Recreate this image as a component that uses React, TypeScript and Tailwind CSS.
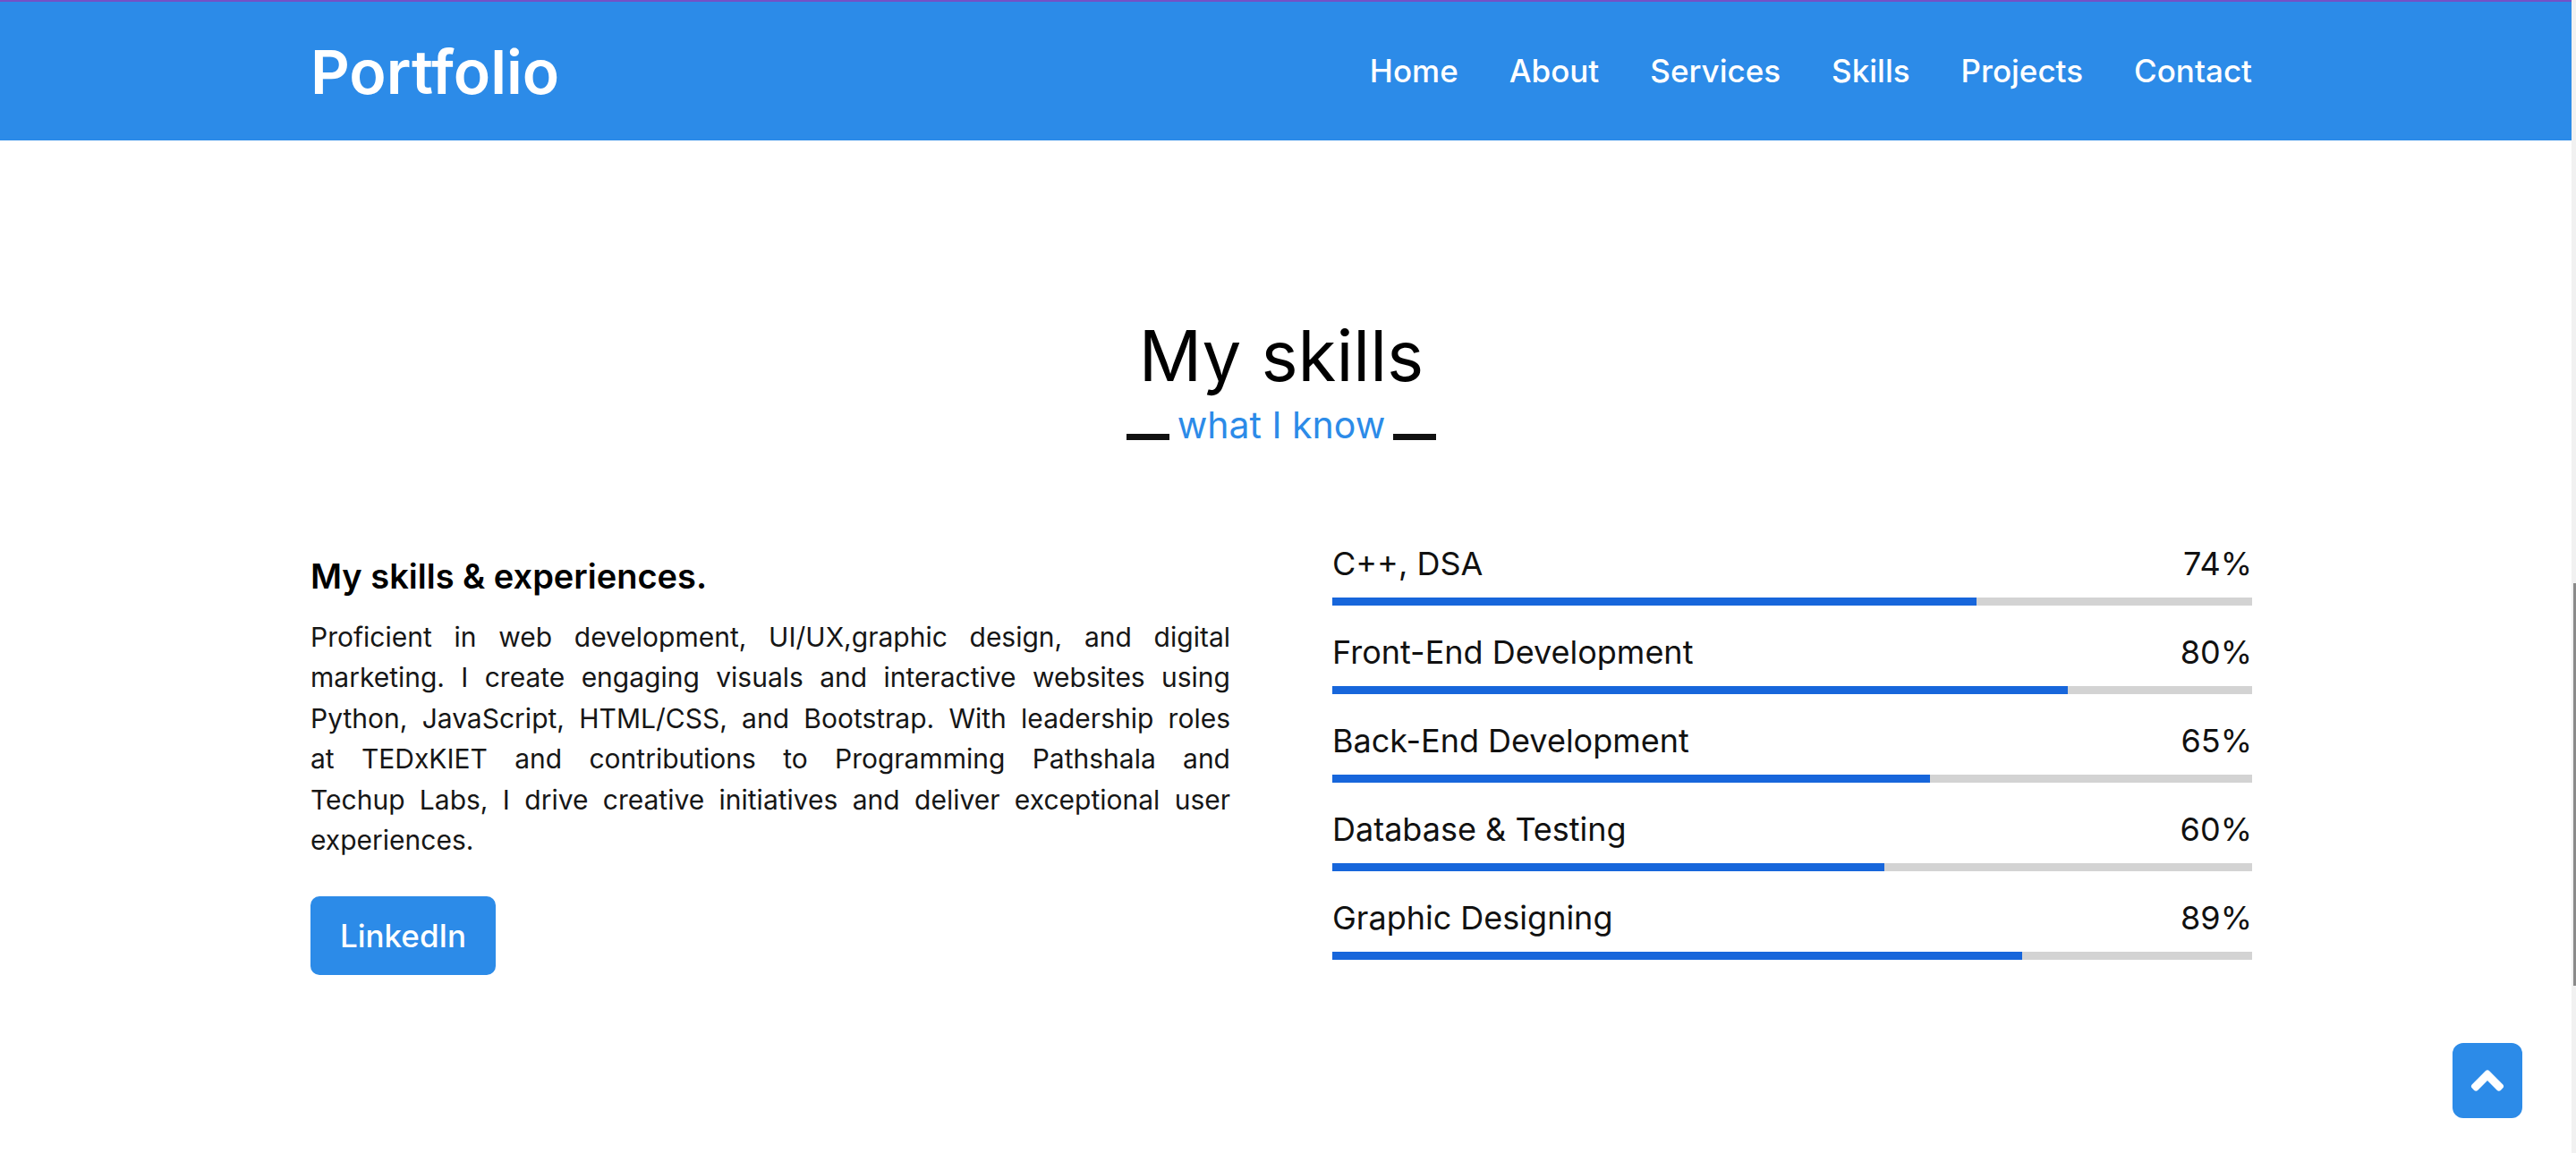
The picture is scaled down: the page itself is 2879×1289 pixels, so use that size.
import { FaAngleUp } from "react-icons/fa";

const links = ["Home", "About", "Services", "Skills", "Projects", "Contact"];

// label, shown percent, bar fill (as drawn in the design)
const skills = [
    { name: "C++, DSA", pct: "74%", fill: 70 },
    { name: "Front-End Development", pct: "80%", fill: 80 },
    { name: "Back-End Development", pct: "65%", fill: 65 },
    { name: "Database & Testing", pct: "60%", fill: 60 },
    { name: "Graphic Designing", pct: "89%", fill: 75 },
];

const paragraph = [
    "Proficient in web development, UI/UX,graphic design, and digital",
    "marketing. I create engaging visuals and interactive websites using",
    "Python, JavaScript, HTML/CSS, and Bootstrap. With leadership roles",
    "at TEDxKIET and contributions to Programming Pathshala and",
    "Techup Labs, I drive creative initiatives and deliver exceptional user",
];

export default function App() {
    return (
        <div className="flex min-h-screen bg-white font-[Inter,sans-serif] text-[#111]">
            <div className="flex-1 min-w-0">
                {/* navbar */}
                <nav className="h-[157px] bg-[#2c8be8] border-t-2 border-[#7451c6]">
                    <div className="h-full pr-[10px]">
                        <div className="mx-auto w-[2170px] h-full flex items-center justify-between">
                            <span className="text-[68px] leading-none font-semibold text-white">Portfolio</span>
                            <ul className="flex items-center gap-[57px]">
                                {links.map((l) => (
                                    <li key={l} className="text-[35px] leading-none font-medium text-white">
                                        {l}
                                    </li>
                                ))}
                            </ul>
                        </div>
                    </div>
                </nav>

                {/* skills */}
                <section className="pt-[202px] pr-[10px]">
                    <div className="mx-auto w-[2170px]">
                        <div className="flex flex-col items-center">
                            <h2 className="text-[78px] leading-none font-normal text-black">My skills</h2>
                            <div className="mt-[18px] flex items-end gap-[9px]">
                                <span className="mb-[4px] w-[48px] h-[7px] bg-[#111]"></span>
                                <span className="text-[41px] leading-none text-[#2c8be8]">what I know</span>
                                <span className="mb-[4px] w-[48px] h-[7px] bg-[#111]"></span>
                            </div>
                        </div>

                        <div className="mt-[116px] grid grid-cols-2 gap-[114px] items-start">
                            <div className="pt-[13px]">
                                <h3 className="text-[38px] leading-none font-semibold text-black">
                                    My skills &amp; experiences.
                                </h3>
                                <div className="mt-[27px] text-[30px] leading-[45.4px] text-[#161616]">
                                    {paragraph.map((line) => (
                                        <div key={line} className="text-justify [text-align-last:justify] whitespace-nowrap">
                                            {line}
                                        </div>
                                    ))}
                                    <div>experiences.</div>
                                </div>
                                <button className="mt-[40px] w-[207px] h-[88px] rounded-[10px] bg-[#2c8be8] text-white text-[35px] font-medium leading-none">
                                    LinkedIn
                                </button>
                            </div>

                            <div className="flex flex-col gap-[34px]">
                                {skills.map((s) => (
                                    <div key={s.name}>
                                        <div className="flex justify-between text-[36px] leading-none text-[#111]">
                                            <span>{s.name}</span>
                                            <span>{s.pct}</span>
                                        </div>
                                        <div className="mt-[20px] h-[9px] bg-[#d3d3d3]">
                                            <div className="h-full bg-[#1766db]" style={{ width: `${s.fill}%` }}></div>
                                        </div>
                                    </div>
                                ))}
                            </div>
                        </div>
                    </div>
                </section>
            </div>

            {/* scrollbar strip */}
            <div className="w-[5px] bg-[#f1f1f1] flex justify-end">
                <div className="mt-[652px] w-[3px] h-[450px] bg-[#8a8a8a]"></div>
            </div>

            <button className="fixed right-[60px] bottom-[39px] w-[78px] h-[84px] rounded-[12px] bg-[#2c8be8] flex items-center justify-center text-white">
                <FaAngleUp size={58} />
            </button>
        </div>
    );
}
